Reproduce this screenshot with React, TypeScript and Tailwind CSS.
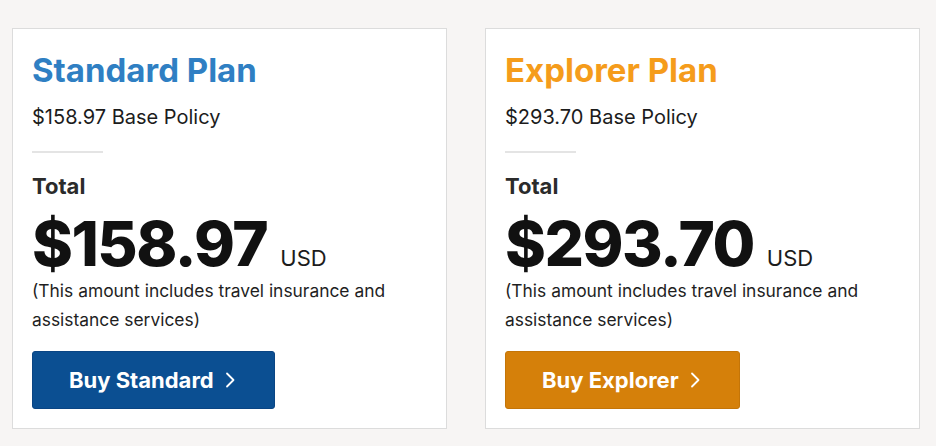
import { ReactNode } from 'react';

interface PlanCardProps {
  title: string;
  base: string;
  total: string;
  cta: string;
  titleClass: string;
  buttonClass: string;
}

const Chevron = () => (
  <svg
    width="11"
    height="16"
    viewBox="0 0 11 16"
    fill="none"
    stroke="currentColor"
    strokeWidth="1.8"
    strokeLinecap="round"
    strokeLinejoin="round"
  >
    <polyline points="2,1.5 8.5,8 2,14.5" />
  </svg>
);

const PlanCard = (props: PlanCardProps & { children?: ReactNode }) => {
  const { title, base, total, cta, titleClass, buttonClass } = props;

  return (
    <div className="flex h-[401px] w-[435px] flex-col border border-[#dcdcdc] bg-white pl-[19px] pt-[21px]">
      <h2 className={`text-[33px] leading-[40px] font-bold ${titleClass}`}>{title}</h2>
      <p className="mt-[13px] text-[20px] leading-[28px] text-[#1c1c1c]">{base}</p>
      <div className="mt-[20px] h-[2px] w-[71px] bg-[#e4e4e4]" />
      <p className="mt-[19px] text-[22px] leading-[28px] font-bold text-[#2b2b2b]">Total</p>
      <div className="mt-[13px] flex items-baseline">
        <span className="text-[62px] leading-[62px] font-extrabold tracking-[-1.5px] text-[#111]">
          {total}
        </span>
        <span className="ml-[13px] text-[22px] text-[#1c1c1c]">USD</span>
      </div>
      <p className="mt-[1px] w-[392px] text-[17.4px] leading-[29px] text-[#1f1f1f]">
        (This amount includes travel insurance and assistance services)
      </p>
      <button
        type="button"
        className={`mt-[17px] flex h-[58px] w-fit items-center gap-[11px] rounded-[3px] border pl-[36px] pr-[38px] text-[22px] font-bold text-white ${buttonClass}`}
      >
        {cta}
        <Chevron />
      </button>
    </div>
  );
};

export default function App() {
  return (
    <div
      className="flex h-[446px] w-[936px] gap-[38px] bg-[#f7f5f4] pl-[12px] pt-[28px]"
      style={{ fontFamily: 'Inter, "Noto Sans", sans-serif' }}
    >
      <PlanCard
        title="Standard Plan"
        base="$158.97 Base Policy"
        total="$158.97"
        cta="Buy Standard"
        titleClass="text-[#2f7fc3]"
        buttonClass="bg-[#0b4f92] border-[#0a4584]"
      />
      <PlanCard
        title="Explorer Plan"
        base="$293.70 Base Policy"
        total="$293.70"
        cta="Buy Explorer"
        titleClass="text-[#f59c1b]"
        buttonClass="bg-[#d5800a] border-[#c47508]"
      />
    </div>
  );
}
